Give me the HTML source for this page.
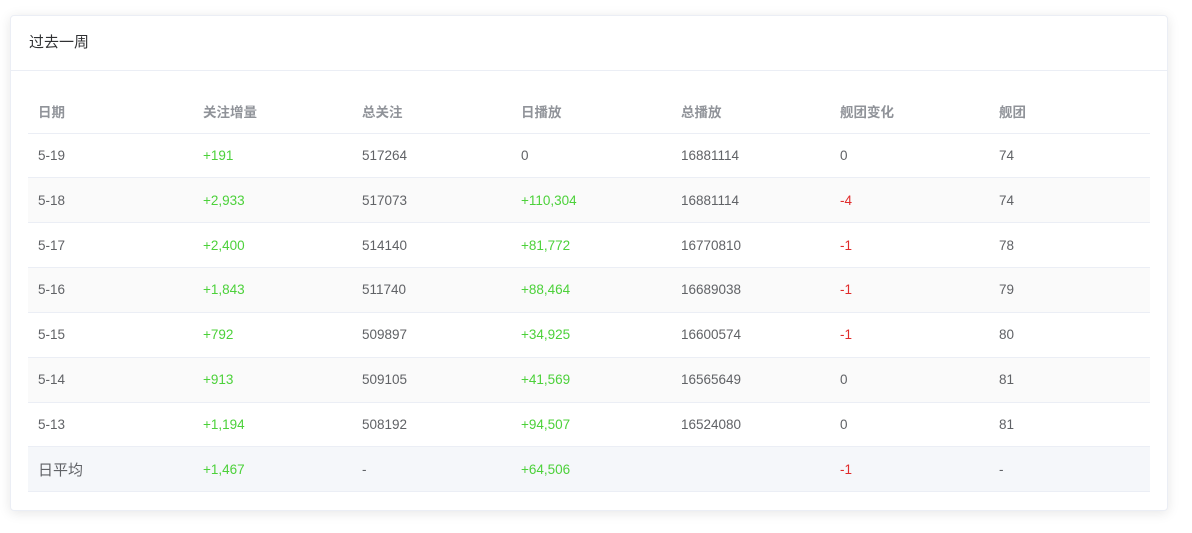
<!DOCTYPE html>
<html><head><meta charset="utf-8"><style>
*{margin:0;padding:0;box-sizing:border-box}
body{width:1192px;height:533px;background:#fff;font-family:"Liberation Sans","Noto Sans CJK SC",sans-serif;position:relative;overflow:hidden}
.card{position:absolute;left:10px;top:15px;width:1158px;height:496px;background:#fff;border:1px solid #ebeef5;border-radius:4px;box-shadow:0 2px 12px rgba(0,0,0,.1)}
.hd{height:55px;border-bottom:1px solid #ebeef5;padding:0 18px;line-height:54px;font-size:15px;color:#303133}
table{position:absolute;left:17px;top:73px;width:1122px;border-collapse:collapse;table-layout:fixed}
th,td{text-align:left;padding:0 10px;font-size:13.5px;border-bottom:1px solid #ebeef5;color:#606266;font-weight:normal}
th{height:44px;color:#909399;font-weight:bold;font-size:13.5px}
td{height:44.85px}
tr.s td{background:#fafafa}
tr.avg td{background:#f5f7fa}
.g{color:#4cd13a}.r{color:#e02b2b}
</style></head><body>
<div class="card"><div class="hd">过去一周</div>
<table>
<colgroup><col style="width:165px"><col style="width:159px"><col style="width:159px"><col style="width:160px"><col style="width:159px"><col style="width:159px"><col></colgroup>
<tr><th>日期</th><th>关注增量</th><th>总关注</th><th>日播放</th><th>总播放</th><th>舰团变化</th><th>舰团</th></tr>
<tr><td>5-19</td><td class="g">+191</td><td>517264</td><td>0</td><td>16881114</td><td>0</td><td>74</td></tr>
<tr class="s"><td>5-18</td><td class="g">+2,933</td><td>517073</td><td class="g">+110,304</td><td>16881114</td><td class="r">-4</td><td>74</td></tr>
<tr><td>5-17</td><td class="g">+2,400</td><td>514140</td><td class="g">+81,772</td><td>16770810</td><td class="r">-1</td><td>78</td></tr>
<tr class="s"><td>5-16</td><td class="g">+1,843</td><td>511740</td><td class="g">+88,464</td><td>16689038</td><td class="r">-1</td><td>79</td></tr>
<tr><td>5-15</td><td class="g">+792</td><td>509897</td><td class="g">+34,925</td><td>16600574</td><td class="r">-1</td><td>80</td></tr>
<tr class="s"><td>5-14</td><td class="g">+913</td><td>509105</td><td class="g">+41,569</td><td>16565649</td><td>0</td><td>81</td></tr>
<tr><td>5-13</td><td class="g">+1,194</td><td>508192</td><td class="g">+94,507</td><td>16524080</td><td>0</td><td>81</td></tr>
<tr class="avg"><td style="font-size:15px">日平均</td><td class="g">+1,467</td><td>-</td><td class="g">+64,506</td><td></td><td class="r">-1</td><td>-</td></tr>
</table></div>
</body></html>
